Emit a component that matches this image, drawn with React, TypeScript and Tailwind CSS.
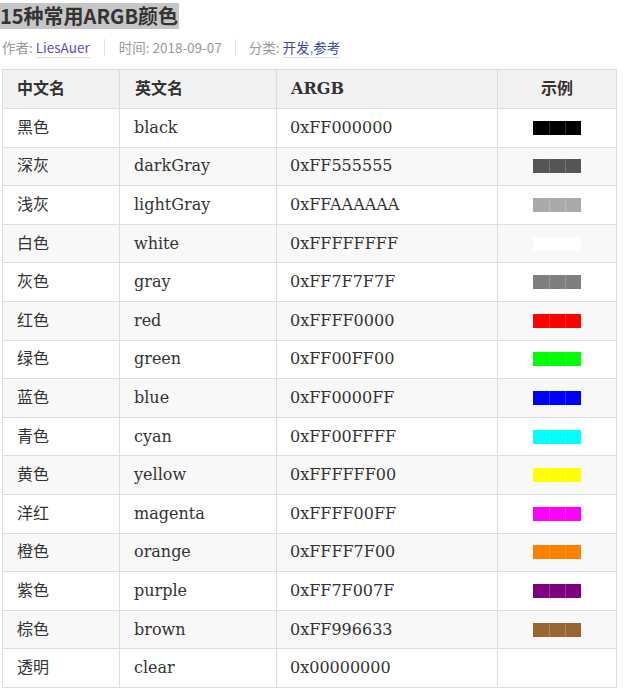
const colors: [string, string, string, string][] = [
  ["黑色", "black", "0xFF000000", "#000000"],
  ["深灰", "darkGray", "0xFF555555", "#555555"],
  ["浅灰", "lightGray", "0xFFAAAAAA", "#aaaaaa"],
  ["白色", "white", "0xFFFFFFFF", "#ffffff"],
  ["灰色", "gray", "0xFF7F7F7F", "#7f7f7f"],
  ["红色", "red", "0xFFFF0000", "#ff0000"],
  ["绿色", "green", "0xFF00FF00", "#00ff00"],
  ["蓝色", "blue", "0xFF0000FF", "#0000ff"],
  ["青色", "cyan", "0xFF00FFFF", "#00ffff"],
  ["黄色", "yellow", "0xFFFFFF00", "#ffff00"],
  ["洋红", "magenta", "0xFFFF00FF", "#ff00ff"],
  ["橙色", "orange", "0xFFFF7F00", "#ff7f00"],
  ["紫色", "purple", "0xFF7F007F", "#7f007f"],
  ["棕色", "brown", "0xFF996633", "#996633"],
  ["透明", "clear", "0x00000000", ""],
];

const Swatch = ({ color }: { color: string }) => {
  if (!color) return null;
  return (
    <div className="flex justify-center">
      {[0, 1, 2].map((i) => (
        <span
          key={i}
          className={`h-[14px] w-[16px] ${i > 0 ? "border-l border-white/20" : ""}`}
          style={{ backgroundColor: color }}
        />
      ))}
    </div>
  );
};

export default function App() {
  const cjk = { fontFamily: '"Noto Sans CJK SC", "Noto Sans", sans-serif' };
  const body = { fontFamily: '"DejaVu Serif", "Noto Sans CJK SC", serif' };

  return (
    <div className="w-[625px] h-[696px] bg-white text-[#333]" style={cjk}>
      <div className="pt-[3px]">
        <h1 className="inline-block bg-[#c6c6c6] pr-[1px] text-[20px] font-bold leading-[26px] text-[#333]">
          15种常用ARGB颜色
        </h1>
      </div>
      <div className="mt-[9px] flex items-center text-[13.5px] leading-[18px] text-[#999]">
        <span className="pl-[2px]">
          作者: <span className="border-b border-[#ddd] text-[#5b4fc7]">LiesAuer</span>
        </span>
        <span className="mx-[14px] h-[17px] w-px bg-[#e3e3e3]" />
        <span>时间: 2018-09-07</span>
        <span className="mx-[13px] h-[17px] w-px bg-[#e3e3e3]" />
        <span>
          分类: <span className="border-b border-[#ddd] text-[#3d4a9e]">开发</span>,
          <span className="border-b border-[#ddd] text-[#3d4a9e]">参考</span>
        </span>
      </div>
      <div className="mt-[13px] pl-[2px]">
        <table className="w-[614px] table-fixed border-collapse text-[16px]" style={body}>
          <colgroup>
            <col className="w-[117px]" />
            <col className="w-[157px]" />
            <col className="w-[221px]" />
            <col className="w-[119px]" />
          </colgroup>
          <thead>
            <tr className="h-[39px] bg-[#f2f2f2] font-bold">
              <th className="border border-[#ddd] pl-[14px] text-left">中文名</th>
              <th className="border border-[#ddd] pl-[15px] text-left">英文名</th>
              <th className="border border-[#ddd] pl-[14px] text-left">ARGB</th>
              <th className="border border-[#ddd] text-center">示例</th>
            </tr>
          </thead>
          <tbody>
            {colors.map(([cn, en, argb, hex], i) => (
              <tr key={en} className={`h-[38.6px] ${i % 2 === 1 ? "bg-[#f8f8f8]" : "bg-white"}`}>
                <td className="border border-[#ddd] pl-[14px]">{cn}</td>
                <td className="border border-[#ddd] pl-[14px]">{en}</td>
                <td className="border border-[#ddd] pl-[13px]">{argb}</td>
                <td className="border border-[#ddd]">
                  <Swatch color={hex} />
                </td>
              </tr>
            ))}
          </tbody>
        </table>
      </div>
    </div>
  );
}
